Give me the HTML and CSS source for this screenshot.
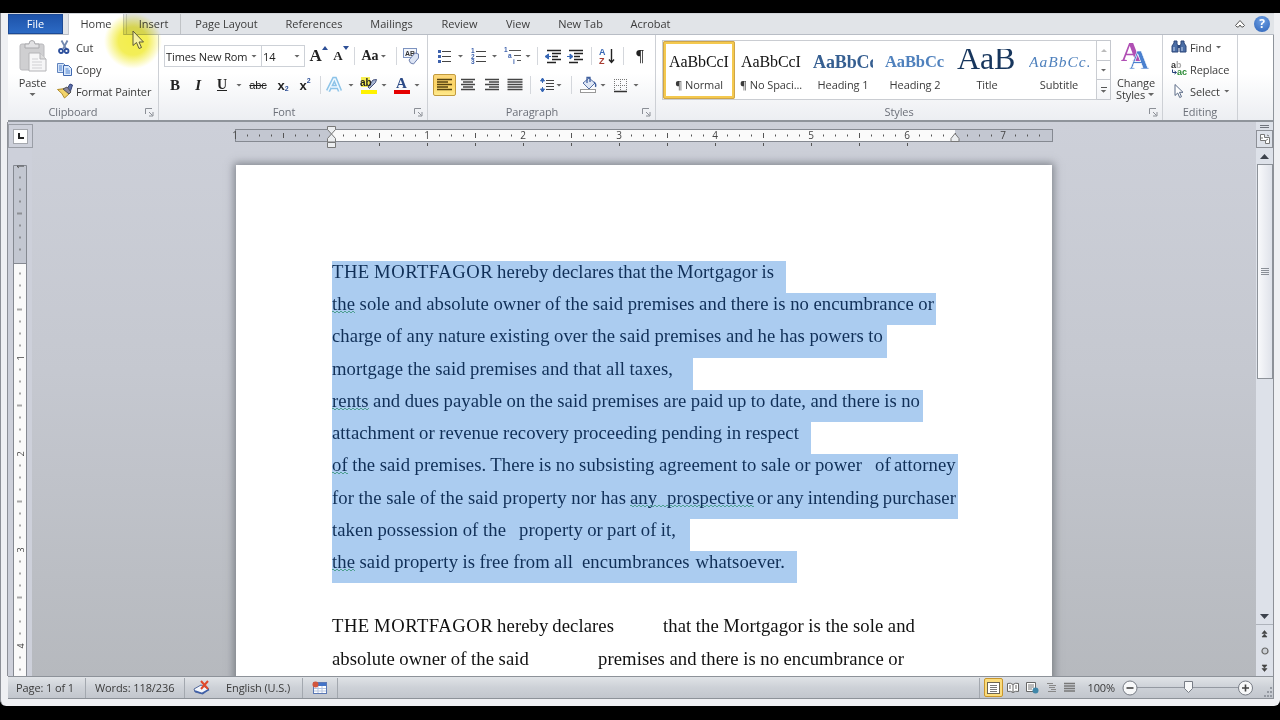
FILE: index.html
```html
<!DOCTYPE html>
<html lang="en">
<head>
  <meta charset="UTF-8">
  <title>Document - Word</title>
  <meta name="viewport" content="width=device-width, initial-scale=1.0">
  <link rel="stylesheet" href="styles.css">
</head>
<body>
  <div class="window">
    <nav class="tabs">
      <a class="tab file">File</a>
      <a class="tab home">Home</a>
      <a class="tab insert">Insert</a>
      <a class="tab layout">Page Layout</a>
      <a class="tab refs">References</a>
      <a class="tab mail">Mailings</a>
      <a class="tab review">Review</a>
      <a class="tab view">View</a>
      <a class="tab newtab">New Tab</a>
      <a class="tab acrobat">Acrobat</a>
      <div class="tabs-right">
        <svg width="12" height="10" viewBox="0 0 12 10"><path d="M1.500 6.500 6 1.500l4.500 5-1.500 1.500H7.500L6 6 4.500 8H3z" fill="#fff" stroke="#555" stroke-width="1"/></svg>
        <span class="help">?</span>
      </div>
    </nav>

    <div class="ribbon">
      <section class="group clipboard">
        <div class="group-body">
          <div class="paste">
            <svg width="28" height="32" viewBox="0 0 28 32">
              <rect x="1" y="4" width="24" height="26" rx="2" fill="#cfcfd1" stroke="#b9b9bc"/>
              <path d="M6 8V4h4q0-3.500 3-3.500T16 4h4v4z" fill="#e2e2e4" stroke="#a9a9ac"/>
              <path d="M10 13h11l6 6v12H10z" fill="#f6f6f7" stroke="#b4b4b7"/>
              <path d="M21 13v6h6" fill="#ddd" stroke="#b4b4b7"/>
              <path d="M13 19h6M13 22h10M13 25h10M13 28h10" stroke="#d0d0d3"/>
            </svg>
            <span>Paste</span>
            <i class="caret"></i>
          </div>
          <div class="clip-list">
            <div class="cmd">
              <svg width="17" height="16" viewBox="0 0 17 16"><path d="M4.500 1.500l5 9M10.500 1.500L6 10" stroke="#7389b0" stroke-width="1.800"/><circle cx="4" cy="12" r="2" fill="none" stroke="#2c4f9c" stroke-width="1.800"/><circle cx="9.500" cy="12" r="2" fill="none" stroke="#2c4f9c" stroke-width="1.800"/></svg>
              <span>Cut</span>
            </div>
            <div class="cmd">
              <svg width="17" height="16" viewBox="0 0 17 16"><path d="M.5 2.500h6l2 2v7h-8z" fill="#d4e4fa" stroke="#5f83bd"/><path d="M6.500 4.500h5l3 3v7h-8z" fill="#dceafc" stroke="#3f68b0"/><path d="M2 5h3M2 7h3M2 9h3M8.500 8h3M8.500 10h4.500M8.500 12h4.500" stroke="#4c80cc"/></svg>
              <span>Copy</span>
            </div>
            <div class="cmd">
              <svg width="17" height="16" viewBox="0 0 17 16"><path d="M10 6l3-5 2.500 1-2 6z" fill="#5a6ea8" stroke="#36437a"/><path d="M.5 6.500l8-1 4 5-5 4.500q-2-5-7-8.500z" fill="#f2d36a" stroke="#b08a25"/><path d="M6 6l4-2 4 5-2 2z" fill="#8a87a0" stroke="#555"/></svg>
              <span>Format Painter</span>
            </div>
          </div>
        </div>
        <footer>Clipboard<svg class="launcher" width="9" height="9" viewBox="0 0 9 9"><path d="M.5 6V.5H7M4 4l3.500 3.500M4 8h4V4" fill="none" stroke="#8b8f96"/></svg></footer>
      </section>

      <section class="group font">
        <div class="group-body rows">
          <div class="row">
            <div class="combo name"><span>Times New Rom</span><i class="caret"></i></div>
            <div class="combo size"><span>14</span><i class="caret"></i></div>
            <span class="tool grow">A<svg width="6" height="4" viewBox="0 0 6 4"><path d="M0 4l3-4 3 4z" fill="#2d4f96"/></svg></span>
            <span class="tool shrink">A<svg width="6" height="4" viewBox="0 0 6 4"><path d="M0 0h6L3 4z" fill="#2d4f96"/></svg></span>
            <i class="sep"></i>
            <span class="tool case">Aa<i class="caret"></i></span>
            <i class="sep"></i>
            <svg class="clear-fmt" width="20" height="18" viewBox="0 0 20 18"><rect x="1.500" y="1.500" width="13" height="9" fill="#f3f6fc" stroke="#7d93c0"/><text x="3" y="9" class="mini">AB</text><path d="M7 13l6-7 3.500 1v4l-5 6-3-1z" fill="#dce4f4" stroke="#6d7fae"/></svg>
          </div>
          <div class="row second">
            <span class="tool bold">B</span>
            <span class="tool italic">I</span>
            <span class="tool under">U</span>
            <i class="caret u-caret"></i>
            <span class="tool strike">abc</span>
            <span class="tool subs">x<sub>2</sub></span>
            <span class="tool sups">x<sup>2</sup></span>
            <i class="sep"></i>
            <svg width="22" height="20" viewBox="0 0 22 20"><path d="M4 16L10 4h1l5 12M7 12h7" fill="none" stroke="#8cc3e8" stroke-width="4.500"/><path d="M4 16L10 4h1l5 12M7 12h7" fill="none" stroke="#eef8ff" stroke-width="1.600"/></svg>
            <i class="caret"></i>
            <svg class="hl" width="20" height="20" viewBox="0 0 20 20"><rect x="2" y="2" width="9" height="10" fill="#f6ee52"/><path d="M9 12l5-7 3.500-.500-1 3-6 6z" fill="#a5b4d2" stroke="#44507a"/><text x="1" y="11" class="ab">ab</text><rect x="2" y="15" width="16" height="4" fill="#fff200"/></svg>
            <i class="caret"></i>
            <svg class="fc" width="20" height="20" viewBox="0 0 20 20"><text x="4" y="13" class="letter">A</text><rect x="2" y="15" width="16" height="4" fill="#e50000"/></svg>
            <i class="caret"></i>
          </div>
        </div>
        <footer>Font<svg class="launcher" width="9" height="9" viewBox="0 0 9 9"><path d="M.5 6V.5H7M4 4l3.500 3.500M4 8h4V4" fill="none" stroke="#8b8f96"/></svg></footer>
      </section>

      <section class="group paragraph">
        <div class="group-body rows">
          <div class="row">
            <svg width="21" height="20" viewBox="0 0 21 20"><path d="M9 5.500h9M9 10.500h9M9 15.500h9" stroke="#444"/><path d="M5 4h3v3H5zM5 9h3v3H5zM5 14h3v3H5z" fill="#3e62ad"/></svg>
            <i class="caret w13"></i>
            <svg width="21" height="20" viewBox="0 0 21 20"><path d="M9 5.500h10M9 10.500h10M9 15.500h10" stroke="#444"/><text class="nums" x="4" y="7">1</text><text class="nums" x="4" y="12.500">2</text><text class="nums" x="4" y="18">3</text></svg>
            <i class="caret w13"></i>
            <svg width="22" height="20" viewBox="0 0 22 20"><path d="M8 4.500h12M13 9.500h7M16 14.500h4" stroke="#555"/><text class="nums" x="3" y="6">1</text><text class="nums" x="7" y="12">a</text><text class="nums" x="12" y="18">i</text></svg>
            <i class="caret w10"></i>
            <i class="sep w8"></i>
            <svg width="23" height="20" viewBox="0 0 23 20"><path d="M6 4.500h14M11 7.500h9M11 10.500h6M11 13.500h9M6 16.500h9" stroke="#222" stroke-width="1.500"/><path d="M10 10.500H5M7.500 8L4 10.500 7.500 13z" fill="#3767b5" stroke="#3767b5"/></svg>
            <svg width="22" height="20" viewBox="0 0 22 20"><path d="M5 4.500h14M10 7.500h9M10 10.500h6M10 13.500h9M5 16.500h9" stroke="#222" stroke-width="1.500"/><path d="M3 10.500h4M6 8l3 2.500L6 13z" fill="#3767b5" stroke="#3767b5"/></svg>
            <i class="sep w10"></i>
            <svg width="22" height="20" viewBox="0 0 22 20"><text class="sort-a" x="3" y="9">A</text><text class="sort-z" x="3" y="18">Z</text><path d="M15.500 3v13M13 13.500l2.500 3 2.500-3" fill="none" stroke="#222" stroke-width="1.400"/></svg>
            <i class="sep w10"></i>
            <span class="tool pilcrow">¶</span>
          </div>
          <div class="row second">
            <span class="toggle"><svg width="15" height="14" viewBox="0 0 15 14"><path d="M0 1.500h15M0 4h11M0 6.500h15M0 9h11M0 11.500h15" stroke="#57430f" stroke-width="1.300"/></svg></span>
            <svg width="24" height="14" viewBox="0 0 24 14"><path d="M5 1.500h14M7 4h10M5 6.500h14M7 9h10M5 11.500h14" stroke="#444" stroke-width="1.300"/></svg>
            <svg width="24" height="14" viewBox="0 0 24 14"><path d="M5 1.500h14M9 4h10M5 6.500h14M9 9h10M5 11.500h14" stroke="#444" stroke-width="1.300"/></svg>
            <svg width="22" height="14" viewBox="0 0 22 14"><path d="M3.500 1.500h15M3.500 4h15M3.500 6.500h15M3.500 9h15M3.500 11.500h15" stroke="#444" stroke-width="1.300"/></svg>
            <i class="sep w9"></i>
            <svg width="20" height="20" viewBox="0 0 20 20"><path d="M11 5.500h8M11 8.500h8M11 11.500h8M11 14.500h8" stroke="#444"/><path d="M7.500 3v5M7.500 12v5M5.500 6l2-3 2 3zM5.500 14l2 3 2-3z" fill="#3767b5" stroke="#3767b5"/></svg>
            <i class="caret w8"></i>
            <i class="sep w16"></i>
            <svg width="19" height="20" viewBox="0 0 19 20"><path d="M4 8l6-5 6 5-6 6z" fill="#dfe7f5" stroke="#5570a5"/><path d="M8 8V2.500h3V7M15 7q2.500 2 1.500 5" fill="none" stroke="#3f5f9e" stroke-width="1.300"/><rect x="1.500" y="14.500" width="15" height="3" fill="#fff" stroke="#999"/></svg>
            <i class="caret w10"></i>
            <svg width="23" height="20" viewBox="0 0 23 20"><path d="M6.500 4v12M12.500 4v12M18.500 4v12M6 4.500h13M6 10.500h13" stroke="#777" stroke-dasharray="1 1"/><path d="M6 16.500h13" stroke="#333" stroke-width="1.500"/></svg>
            <i class="caret w10"></i>
          </div>
        </div>
        <footer>Paragraph<svg class="launcher" width="9" height="9" viewBox="0 0 9 9"><path d="M.5 6V.5H7M4 4l3.500 3.500M4 8h4V4" fill="none" stroke="#8b8f96"/></svg></footer>
      </section>

      <section class="group styles">
        <div class="group-body">
          <div class="gallery">
            <div class="style selected"><b class="preview">AaBbCcI</b><span>¶ Normal</span></div>
            <div class="style"><b class="preview">AaBbCcI</b><span>¶ No Spaci...</span></div>
            <div class="style"><b class="preview h1">AaBbCc</b><span>Heading 1</span></div>
            <div class="style"><b class="preview h2">AaBbCc</b><span>Heading 2</span></div>
            <div class="style"><b class="preview title">AaB</b><span>Title</span></div>
            <div class="style"><b class="preview subtitle">AaBbCc.</b><span>Subtitle</span></div>
          </div>
          <div class="gallery-nav">
            <span class="off"><i class="caret up"></i></span>
            <span><i class="caret"></i></span>
            <span class="more"><i class="caret"></i></span>
          </div>
          <div class="change">
            <svg width="32" height="30" viewBox="0 0 32 30"><text x="0" y="20" class="big-a pink">A</text><text x="8" y="28" class="big-a blue">A</text></svg>
            <span>Change</span>
            <span>Styles <i class="caret"></i></span>
          </div>
        </div>
        <footer>Styles<svg class="launcher" width="9" height="9" viewBox="0 0 9 9"><path d="M.5 6V.5H7M4 4l3.500 3.500M4 8h4V4" fill="none" stroke="#8b8f96"/></svg></footer>
      </section>

      <section class="group editing">
        <div class="group-body">
          <div class="cmd">
            <svg width="16" height="16" viewBox="0 0 16 16"><path d="M3 2h3v3l1 2v6H1V7l2-3zM10 2h3v2l2 3v6H9V7l1-2z" fill="#4a6da5" stroke="#2c4678"/><path d="M7 6h2v3H7z" fill="#2c4678"/><path d="M3 8v4M11 8v4" stroke="#c6d6ee"/></svg>
            <span>Find</span><i class="caret"></i>
          </div>
          <div class="cmd">
            <svg width="16" height="16" viewBox="0 0 16 16"><text x="0" y="7" class="rep">a<tspan fill="#aaa">b</tspan></text><text x="6" y="14" class="rep green">ac</text><path d="M1.500 8.500v3H5M3.500 10l2 1.500-2 1.500" fill="none" stroke="#27407a"/></svg>
            <span>Replace</span>
          </div>
          <div class="cmd">
            <svg width="16" height="16" viewBox="0 0 16 16"><path d="M4 1.500v11l2.700-2.500 2 4.500 1.800-.8-2-4.400H12z" fill="#fff" stroke="#5a6a86"/></svg>
            <span>Select</span><i class="caret"></i>
          </div>
        </div>
        <footer>Editing</footer>
      </section>
    </div>

    <div class="workspace">
      <div class="left-strip">
        <div class="tab-box"><span><svg width="6" height="6" viewBox="0 0 6 6"><path d="M1 0v5h5" fill="none" stroke="#222" stroke-width="2"/></svg></span></div>
        <svg class="vruler" width="15" height="512" viewBox="0 0 15 512">
          <defs>
            <pattern id="vmarks" width="15" height="96" y=".5" patternUnits="userSpaceOnUse">
              <path d="M6 12h2M6 24h2M6 36h2M4 48h5M6 60h2M6 72h2M6 84h2" stroke="#555"/>
            </pattern>
          </defs>
          <rect width="14" height="99" fill="#c3c7d1"/>
          <rect y="99" width="14" height="413" fill="#fafafa"/>
          <rect width="14" height="512" fill="url(#vmarks)"/>
          <path d="M.5 512V.5h13V512M0 98.500h14" fill="none" stroke="#858991"/>
          <text transform="translate(10.500 1.500)rotate(-90)">1</text>
          <text transform="translate(10.500 193)rotate(-90)">1</text>
          <text transform="translate(10.500 289)rotate(-90)">2</text>
          <text transform="translate(10.500 385)rotate(-90)">3</text>
          <text transform="translate(10.500 481)rotate(-90)">4</text>
        </svg>
      </div>

      <div class="canvas">
        <svg class="hruler" width="818" height="26" viewBox="0 0 818 26">
          <defs>
            <pattern id="hmarks" width="96" height="26" patternUnits="userSpaceOnUse">
              <path d="M12.500 9.500v2M24.500 9.500v2M36.500 9.500v2M48.500 8v5M60.500 9.500v2M72.500 9.500v2M84.500 9.500v2" stroke="#555"/>
            </pattern>
            <pattern id="hstops" width="48" height="26" patternUnits="userSpaceOnUse">
              <path d="M.5 18v3" stroke="#555"/>
            </pattern>
          </defs>
          <rect y="4" width="818" height="13" fill="#c3c7d1"/>
          <rect x="96" y="4" width="624" height="13" fill="#fafafa"/>
          <rect width="808" height="26" fill="url(#hmarks)"/>
          <rect x="140" width="540" height="26" fill="url(#hstops)"/>
          <rect x=".5" y="4.500" width="817" height="12" fill="none" stroke="#858991"/>
          <g>
            <text x="0" y="14">1</text><text x="192" y="14">1</text><text x="288" y="14">2</text>
            <text x="384" y="14">3</text><text x="480" y="14">4</text><text x="576" y="14">5</text>
            <text x="672" y="14">6</text><text x="768" y="14">7</text>
          </g>
          <path d="M92.500 1.500h8v3l-4 4.500-4-4.500zM92.500 17v-3.500l4-4.500 4 4.500V17zM92.500 17.500h8v5h-8zM716 16.500v-3l4-5 4 5v3z" fill="#eceef0" stroke="#777"/>
        </svg>

        <article class="page">
          <div class="line sel l1"><p><b>THE MORTFAGOR</b> hereby declares that the Mortgagor is</p></div>
          <div class="line sel l2"><p><u>the</u> sole and absolute owner of the said premises and there is no encumbrance or</p></div>
          <div class="line sel l3"><p>charge of any nature existing over the said premises and he has powers to</p></div>
          <div class="line sel l4"><p>mortgage the said premises and that all taxes,</p></div>
          <div class="line sel l5"><p><u>rents</u> and dues payable on the said premises are paid up to date, and there is no</p></div>
          <div class="line sel l6"><p>attachment or revenue recovery proceeding pending in respect</p></div>
          <div class="line sel l7"><p><u>of</u> the said premises. There is no subsisting agreement to sale or power</p><p>of attorney</p></div>
          <div class="line sel l8"><p>for the sale of the said property nor has</p><p><u>any&nbsp; prospective</u></p><p>or any intending purchaser</p></div>
          <div class="line sel l9"><p>taken possession of the</p><p>property or part of it,</p></div>
          <div class="line sel l10"><p><u>the</u> said property is free from all</p><p>encumbrances whatsoever.</p></div>
          <div class="line"></div>
          <div class="line l12"><p><b>THE MORTFAGOR</b> hereby declares</p><p>that the Mortgagor is the sole and</p></div>
          <div class="line l13"><p>absolute owner of the said</p><p>premises and there is no encumbrance or</p></div>
        </article>
      </div>

      <div class="scrollbar">
        <i class="split"></i>
        <span class="ruler-toggle"><svg width="12" height="12" viewBox="0 0 12 12"><path d="M1.500 1.500h4v3h5v6h-4v-3h-5zM3 4v2M6 8l3-2M8 2l2 1" fill="#fff" stroke="#777"/></svg></span>
        <span class="arrow"><svg width="9" height="5" viewBox="0 0 9 5"><path d="M0 5l4.500-5L9 5z" fill="#3c424c"/></svg></span>
        <span class="thumb"><i></i></span>
        <span class="track"></span>
        <span class="arrow down"><svg width="9" height="5" viewBox="0 0 9 5"><path d="M0 0h9L4.500 5z" fill="#3c424c"/></svg></span>
        <span class="nav"><svg width="7" height="8" viewBox="0 0 7 8"><path d="M1 3.500l2.500-3 2.500 3zM1 7l2.500-3L6 7z" fill="#444" stroke="#444" stroke-width=".6"/></svg></span>
        <span class="nav"><svg width="8" height="8" viewBox="0 0 8 8"><circle cx="4" cy="4" r="3" fill="#ccd0d6" stroke="#666" stroke-width="1.200"/></svg></span>
        <span class="nav"><svg width="7" height="8" viewBox="0 0 7 8"><path d="M1 1h5L3.500 4zM1 4.500h5l-2.500 3z" fill="#444" stroke="#444" stroke-width=".6"/></svg></span>
      </div>
    </div>

    <div class="status">
      <span class="cell pages">Page: 1 of 1</span>
      <span class="cell words">Words: 118/236</span>
      <span class="cell lang">
        <svg width="18" height="15" viewBox="0 0 18 15"><path d="M1 9l7-4 8 4-6 5-8-2z" fill="#f3f6fb" stroke="#51689c"/><path d="M2 11l7 2.500 7-4" fill="none" stroke="#3e5fa8" stroke-width="1.500"/><path d="M8 1l7 8M15 1L8 9" stroke="#e0492b" stroke-width="2"/></svg>
        English (U.S.)
      </span>
      <span class="cell macro">
        <svg width="16" height="14" viewBox="0 0 16 14"><rect x="1.500" y="1.500" width="13" height="11" fill="#fff" stroke="#5b78b4"/><path d="M2 2h12v3H2z" fill="#4273c8"/><path d="M2 7.500h12M2 10h12M6 5v7M10 5v7" stroke="#b5c4e0"/><circle cx="3.500" cy="3.500" r="3" fill="#d2553c"/></svg>
      </span>
      <div class="views">
        <span class="view-btn on"><svg width="13" height="12" viewBox="0 0 13 12"><rect x=".5" y=".5" width="12" height="11" fill="#fff" stroke="#6b6350"/><path d="M3 3.500h7M3 5.500h7M3 7.500h7M3 9.500h7" stroke="#777"/></svg></span>
        <svg width="12" height="12" viewBox="0 0 12 12"><path d="M.5 1.500q3-1 5.500 1 2.500-2 5.500-1v8q-3-1-5.500 1-2.500-2-5.500-1zM6 2.500v8M2 4h2M2 6h2M8 4h2M8 6h2" fill="#fff" stroke="#666"/></svg>
        <svg width="13" height="12" viewBox="0 0 13 12"><path d="M.5.500h9v9h-9z" fill="#fff" stroke="#666"/><path d="M2 3h6M2 5h6M2 7h4" stroke="#777"/><circle cx="9.500" cy="8.500" r="3" fill="#3f86a8"/></svg>
        <svg width="11" height="12" viewBox="0 0 11 12"><path d="M1 1.500h6M3 3.500h7M3 5.500h6M5 7.500h5M2 9.500h8" stroke="#888"/></svg>
        <svg width="11" height="12" viewBox="0 0 11 12"><path d="M0 1.500h11M0 4h11M0 6.500h11M0 9h11" stroke="#777" stroke-width="1.300"/></svg>
      </div>
      <span class="percent">100%</span>
      <svg class="zoom" width="124" height="18" viewBox="0 0 124 18">
        <path d="M15 8.500h101" stroke="#9499a1"/>
        <circle cx="8" cy="9" r="7" fill="#f7f8f9" stroke="#777c85"/><path d="M4.500 9h7" stroke="#444" stroke-width="1.600"/>
        <path d="M62.500 2.500h8v7l-4 4-4-4z" fill="#f7f8f9" stroke="#777c85"/>
        <circle cx="123.500" cy="9" r="7" fill="#f7f8f9" stroke="#777c85"/><path d="M120 9h7M123.500 5.500v7" stroke="#444" stroke-width="1.600"/>
      </svg>
      <svg class="grip" width="11" height="12" viewBox="0 0 11 12"><path d="M8 2h2M5 6h2M8 6h2M2 10h2M5 10h2M8 10h2" stroke="#9499a1" stroke-width="2"/></svg>
    </div>
  </div>

  <div class="halo"></div>
  <svg class="pointer" width="13" height="20" viewBox="0 0 13 20"><path d="M1 1v14.500l3.500-3 2.500 6 2.500-1-2.500-5.500h4.500z" fill="#f6f2a4" stroke="#5c5a36"/></svg>
</body>
</html>
```

FILE: styles.css
```css
* {
  box-sizing: border-box;
}
body {
  margin: 0;
  width: 1280px;
  height: 720px;
  padding: 13px 0 14px;
  background: #000;
  overflow: hidden;
  position: relative;
  font-family: "Open Sans", "Noto Sans", sans-serif;
  font-size: 11px;
  color: #3b3b3b;
}
svg {
  display: block;
  flex: none;
  overflow: visible;
}
.window {
  height: 693px;
  padding: 0 6px 7px 7px;
  background: #eff0f3;
  border-left: 1px solid #8d9097;
  border-radius: 0 0 6px 6px;
  display: flex;
  flex-direction: column;
}

/* tabs */
.tabs {
  height: 22px;
  display: flex;
  background: #e1e4e8;
  border-bottom: 1px solid #b8bdc5;
  border-top: 1px solid #d2d5da;
}
.tab {
  height: 20px;
  line-height: 19px;
  text-align: center;
  white-space: nowrap;
}
.file {
  width: 55px;
  margin-right: 5px;
  color: #fff;
  background: linear-gradient(#1e53a9, #2c6ac4);
  border: 1px solid #1c4a96;
  line-height: 17px;
}
.home {
  width: 56px;
  height: 21px;
  background: #fff;
  border: 1px solid #c3c7ce;
  border-width: 0 1px;
}
.insert {
  width: 55px;
  margin-left: 2px;
  border: 1px solid #c0c3c6;
  border-width: 0 1px;
}
.layout { width: 91px; }
.refs { width: 84px; }
.mail { width: 71px; }
.review { width: 65px; }
.view { width: 52px; }
.newtab { width: 73px; }
.acrobat { width: 67px; }
.tabs-right {
  margin-left: auto;
  padding-right: 4px;
  display: flex;
  align-items: center;
  gap: 8px;
}
.help {
  width: 16px;
  height: 16px;
  border-radius: 50%;
  background: radial-gradient(circle at 50% 30%, #6ea0e4, #2c62b8);
  color: #fff;
  font-weight: bold;
  line-height: 16px;
  text-align: center;
  font-size: 12px;
}

/* ribbon */
.ribbon {
  height: 87px;
  display: flex;
  background: linear-gradient(#fff 0%, #fff 45%, #eceef2 100%);
  border-bottom: 2px solid #8f949b;
  border-right: 1px solid #8f949b;
  letter-spacing: -.1px;
}
.group {
  display: flex;
  flex-direction: column;
  border-right: 1px solid #cdd0d5;
}
.group-body {
  height: 69px;
  display: flex;
}
.group footer {
  height: 16px;
  line-height: 16px;
  text-align: center;
  color: #6c7079;
  position: relative;
}
.launcher {
  position: absolute;
  right: 4px;
  top: 4px;
}
.clipboard { width: 151px; }
.clipboard footer { padding-right: 20px; }
.font { width: 269px; }
.font footer { padding-right: 18px; }
.paragraph { width: 228px; }
.paragraph footer { padding-right: 19px; }
.styles { width: 507px; }
.styles footer { padding-right: 20px; }
.editing { width: 75px; }
.caret {
  flex: none;
  display: block;
  width: 10px;
  height: 3px;
  background: #666;
  clip-path: polygon(calc(50% - 3px) 0, calc(50% + 3px) 0, 50% 100%);
}
.caret.up {
  transform: rotate(180deg);
  background: #bbb;
}
.sep {
  flex: none;
  width: 2px;
  height: 18px;
  background: linear-gradient(#d4d7dc, #d4d7dc) center / 1px 100% no-repeat;
}
.w8 { width: 8px; }
.w9 { width: 9px; }
.w10 { width: 10px; }
.w13 { width: 13px; }
.w16 { width: 16px; }

.paste {
  width: 49px;
  padding: 5px 0 0;
  display: flex;
  flex-direction: column;
  align-items: center;
}
.paste span {
  line-height: 15px;
  margin: 3px 0 3px;
}
.clip-list {
  padding-top: 1px;
}
.cmd {
  height: 22px;
  display: flex;
  align-items: center;
  gap: 2px;
  white-space: nowrap;
}
.rows {
  flex-direction: column;
  padding: 10px 0 0 5px;
}
.row {
  height: 22px;
  display: flex;
  align-items: center;
}
.second {
  margin-top: 7px;
}
.combo {
  height: 22px;
  border: 1px solid #cdd1d7;
  background: #fff;
  display: flex;
  align-items: center;
  justify-content: space-between;
  padding-left: 1px;
  color: #222;
  white-space: nowrap;
}
.combo .caret { margin-right: 2px; }
.combo.name { width: 98px; }
.combo.size {
  width: 43px;
  border-left: 0;
}
.tool {
  flex: none;
  display: flex;
  justify-content: center;
  align-items: center;
  font-family: "Liberation Serif", serif;
  font-weight: bold;
  color: #222;
  line-height: 20px;
}
.tool svg { align-self: flex-start; }
.grow { width: 24px; font-size: 17px; padding-left: 3px; }
.shrink { width: 24px; font-size: 13px; }
.case { width: 40px; font-size: 14px; font-weight: bold; }
.clear-fmt { margin-left: 5px; }
.mini { font: bold 7px "Liberation Sans", sans-serif; fill: #333; }
.bold { width: 22px; font-size: 15px; }
.italic { width: 24px; font-size: 15px; font-style: italic; }
.under { width: 24px; font-size: 14px; text-decoration: underline; }
.strike {
  width: 28px;
  font: 11px "Liberation Sans", sans-serif;
  text-decoration: line-through;
}
.subs, .sups {
  width: 22px;
  font: bold 13px "Liberation Sans", sans-serif;
}
.subs sub, .sups sup {
  font-size: 7px;
  color: #2d4f96;
  line-height: 8px;
}
.subs sub { padding-top: 8px; }
.sups sup { padding-bottom: 8px; }
.second .sep { margin: 0 3px; }
.second .sep.w9, .second .sep.w16 { margin: 0; }
.hl { margin-left: 3px; }
.fc { margin-left: 3px; }
.ab { font: bold 10px "Liberation Sans", sans-serif; fill: #222; }
.letter { font: bold 15px "Liberation Serif", serif; fill: #2b4a86; }
.nums { font: bold 6.500px "Liberation Sans", sans-serif; fill: #3e62ad; }
.sort-a { font: bold 9px "Liberation Sans", sans-serif; fill: #3767b5; }
.sort-z { font: bold 9px "Liberation Sans", sans-serif; fill: #a83c32; }
.pilcrow { width: 24px; font: 17px "Liberation Serif", serif; }
.toggle {
  width: 23px;
  height: 22px;
  border: 1px solid #c29b3d;
  border-radius: 2px;
  background: linear-gradient(#fbd77c, #fdd565 50%, #fee98c);
  display: flex;
  align-items: center;
  justify-content: center;
}

.gallery {
  width: 435px;
  height: 60px;
  margin: 5px 0 0 6px;
  border: 1px solid #cacdd2;
  background: #fff;
  display: flex;
}
.style {
  width: 72px;
  height: 58px;
  display: flex;
  flex-direction: column;
  align-items: center;
  white-space: nowrap;
  overflow: hidden;
  padding: 3px;
  flex: none;
}
.style span { line-height: 16px; }
.selected {
  padding: 0;
  border: 3px solid #f4c94f;
  border-radius: 2px;
  outline: 1px solid #cfa549;
  outline-offset: -1px;
}
.preview {
  width: 60px;
  height: 33px;
  display: block;
  overflow: hidden;
  font: 16px/36px "Liberation Serif", serif;
  color: #111;
}
.h1 {
  font-weight: bold;
  font-size: 18px;
  color: #365f91;
}
.h2 {
  font-weight: bold;
  font-size: 16.500px;
  color: #4f81bd;
}
.title {
  font-size: 32px;
  line-height: 28px;
  color: #17365d;
  clip-path: inset(5px 0 0 0);
}
.subtitle {
  font-style: italic;
  letter-spacing: 1px;
  font-size: 15.500px;
  color: #4f81bd;
}
.gallery-nav {
  width: 14px;
  height: 60px;
  margin-top: 5px;
  border: 1px solid #c5c8ce;
  border-left: 0;
  display: flex;
  flex-direction: column;
}
.gallery-nav span {
  flex: 1;
  display: flex;
  flex-direction: column;
  align-items: center;
  justify-content: center;
}
.gallery-nav span + span { border-top: 1px solid #c5c8ce; }
.more::before {
  content: "";
  width: 6px;
  height: 1px;
  margin-bottom: 2px;
  background: #555;
}
.change {
  width: 48px;
  margin-left: 1px;
  padding-top: 6px;
  display: flex;
  flex-direction: column;
  align-items: center;
  line-height: 13px;
}
.change svg { margin: 0 0 5px 2px; }
.change span {
  display: flex;
  align-items: center;
}
.change span + span { margin-top: -1px; }
.change .caret { margin-left: 1px; }
.big-a { font: bold 28px "Liberation Serif", serif; stroke-width: .5px; }
.pink { fill: #b04fb4; }
.blue { fill: #4a80cf; stroke: #fff; }
.editing .group-body {
  flex-direction: column;
  padding: 1px 0 0 8px;
}
.editing .cmd { gap: 3px; }
.editing .caret { margin-left: -1px; }
.rep { font: bold 9px "Liberation Sans", sans-serif; fill: #333; }
.green { fill: #2a8a35; }

/* document area */
.workspace {
  height: 554px;
  display: flex;
  background: linear-gradient(#cdd0d9, #c5c8d0 45%, #b6b9be);
  border-left: 1px solid #8d9097;
  border-right: 1px solid #8d9097;
  margin-left: -1px;
}
.left-strip {
  width: 24px;
  background: #cdd0da;
}
.tab-box {
  width: 25px;
  height: 24px;
  margin-top: 2px;
  border: 1px solid #9a9ea6;
  display: flex;
  align-items: center;
  justify-content: center;
}
.tab-box span {
  width: 15px;
  height: 15px;
  background: #fff;
  border: 1px solid #a5a8ae;
  display: flex;
  align-items: center;
  justify-content: center;
}
.vruler {
  margin: 17px 0 0 5px;
}
.vruler text, .hruler text {
  font: 10px "Open Sans", sans-serif;
  fill: #444;
  text-anchor: middle;
}
.vruler text { font-size: 9px; }
.canvas {
  flex: 1;
  padding-left: 203px;
  overflow: hidden;
}
.hruler {
  margin-top: 3px;
}
.page {
  width: 816px;
  height: 530px;
  margin: 14px 0 0 1px;
  padding: 96px 0 0 96px;
  background: #fff;
  box-shadow: 0 0 8px 2px rgba(70, 74, 82, .55);
  font: 18.670px "Liberation Serif", serif;
  color: #111;
}
.line {
  height: 32.220px;
  display: flex;
}
.line p {
  margin: 0;
  line-height: 21px;
  letter-spacing: .08px;
  word-spacing: -1.500px;
  white-space: nowrap;
  text-align: justify;
  text-align-last: justify;
}
.line b {
  font-weight: normal;
  letter-spacing: .5px;
}
.sel {
  background: #abccf0;
  color: #102f57;
}
/* grammar squiggle: two rows of offset dashes */
.line u {
  text-decoration: none;
  background:
    repeating-linear-gradient(90deg, #4d9f90 0 2px, transparent 2px 4px) 0 calc(100% - 2px) / 100% 1px no-repeat,
    repeating-linear-gradient(90deg, transparent 0 2px, #4d9f90 2px 4px) 0 calc(100% - 1px) / 100% 1px no-repeat;
}
.l1 { width: 454px; }
.l1 p { width: 442px; }
.l2 { width: 604px; }
.l2 p { width: 602px; }
.l3 { width: 555px; }
.l3 p { width: 551px; }
.l4 { width: 361px; }
.l4 p { width: 341px; }
.l5 { width: 591px; }
.l5 p { width: 588px; }
.l6 { width: 479px; }
.l6 p { width: 467px; }
.l7 { width: 626px; }
.l7 p { width: 530px; }
.l7 p + p { width: 80px; margin-left: 13px; }
.l8 { width: 626px; }
.l8 p { width: 294px; }
.l8 p + p { width: 124px; margin-left: 4px; word-spacing: 0; }
.l8 p + p + p { width: 199px; margin-left: 3px; word-spacing: -1.500px; }
.l9 { width: 358px; }
.l9 p { width: 174px; }
.l9 p + p { width: 157px; margin-left: 13px; }
.l10 { width: 465px; }
.l10 p { width: 241px; }
.l10 p + p { width: 203px; margin-left: 9px; }
.l12 p { width: 282px; }
.l12 p + p { width: 252px; margin-left: 49px; }
.l13 p { width: 197px; }
.l13 p + p { width: 306px; margin-left: 69px; }

.scrollbar {
  width: 17px;
  padding-top: 3px;
  background: #dde1e9;
  display: flex;
  flex-direction: column;
  align-items: center;
}
.split {
  width: 9px;
  height: 3px;
  background: #dde1e9;
  border: 1px solid #70757e;
  border-width: 1px 0;
}
.ruler-toggle {
  width: 17px;
  height: 18px;
  margin-top: 2px;
  border: 1px solid #8d9097;
  display: flex;
  align-items: center;
  justify-content: center;
}
.arrow {
  height: 16px;
  display: flex;
  align-items: center;
}
.thumb {
  width: 16px;
  height: 215px;
  background: linear-gradient(90deg, #f8f9fb, #dfe2ea);
  border: 1px solid #8d9299;
  display: flex;
  align-items: center;
  justify-content: center;
}
.thumb i {
  width: 8px;
  height: 8px;
  background: repeating-linear-gradient(#8a8f97 0 1px, transparent 1px 2px);
}
.track { flex: 1; }
.down {
  width: 17px;
  justify-content: center;
  border-bottom: 1px solid #aeb3bb;
}
.nav {
  height: 17px;
  display: flex;
  align-items: center;
}

/* status bar */
.status {
  height: 23px;
  display: flex;
  align-items: center;
  background: linear-gradient(#e0e3e7, #cdd1d7 50%, #c2c6cd);
  border: 1px solid #8d9299;
  border-left: 0;
  letter-spacing: -.1px;
}
.cell {
  height: 20px;
  display: flex;
  align-items: center;
  border-right: 1px solid #a3a8af;
  white-space: nowrap;
}
.pages { width: 78px; padding-left: 8px; }
.words { width: 99px; padding-left: 9px; }
.lang { width: 118px; padding-left: 8px; gap: 15px; }
.macro { width: 35px; padding-left: 9px; }
.views {
  height: 20px;
  margin-left: auto;
  padding-left: 4px;
  border-left: 1px solid #a3a8af;
  display: flex;
  align-items: center;
  gap: 7px;
}
.view-btn {
  width: 19px;
  height: 19px;
  margin-right: -3px;
  border: 1px solid #c9962c;
  border-radius: 2px;
  background: #fbdc7c;
  display: flex;
  align-items: center;
  justify-content: center;
}
.percent {
  margin: 0 7px 0 12px;
}
.grip {
  align-self: flex-end;
  margin-left: 16px;
}

/* mouse pointer */
.halo {
  position: absolute;
  left: 104px;
  top: 13px;
  width: 58px;
  height: 56px;
  background: radial-gradient(closest-side, #f3ee4a 0, #f3ee58 50%, #fffef0 95%, #fff 100%);
  mix-blend-mode: multiply;
}
.pointer {
  position: absolute;
  left: 132px;
  top: 30px;
}
```
